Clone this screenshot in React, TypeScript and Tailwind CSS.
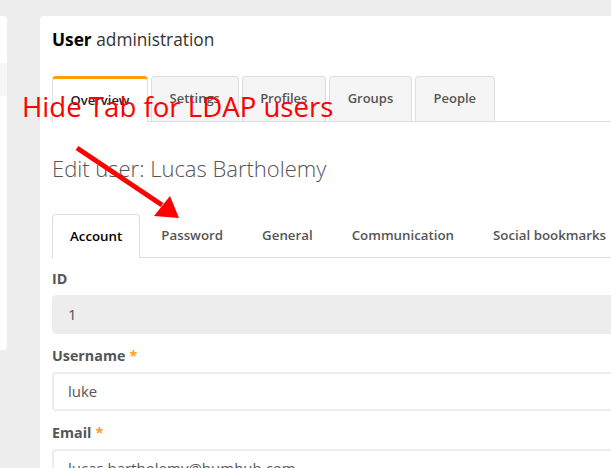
import React from 'react'

const topTabs = ['Overview', 'Settings', 'Profiles', 'Groups', 'People']
const userTabs = ['Account', 'Password', 'General', 'Communication', 'Social bookmarks']

const Field = ({ label, required, value, readOnly }: { label: string; required?: boolean; value: string; readOnly?: boolean }) => (
  <div className="flex flex-col">
    <label className="text-[14.3px] font-bold text-[#555] leading-[20px]">
      {label}
      {required && <span className="text-[#f8a212] ml-1">*</span>}
    </label>
    <div
      className={
        readOnly
          ? 'mt-[6px] h-[39px] rounded-[4px] bg-[#ededed] px-4 flex items-center text-[15px] text-[#555]'
          : 'mt-[6px] h-[39px] rounded-[4px] border-2 border-[#ededed] bg-white px-[14px] flex items-center text-[15px] text-[#555]'
      }
    >
      {value}
    </div>
  </div>
)

const App = () => {
  return (
    <div className="relative w-[611px] h-[468px] overflow-hidden bg-[#ededed] font-['Open_Sans',sans-serif]">
      <div className="flex pt-4 gap-[33px]">
        {/* left sidebar */}
        <div className="w-[7px] h-[334px] bg-white rounded-r-[4px] shrink-0 flex flex-col">
          <div className="mt-[47px] h-[33px] bg-[#f7f7f7]" />
        </div>

        {/* main panel */}
        <div className="w-[660px] shrink-0 bg-white rounded-[4px] px-3 pb-10">
          <h1 className="pt-[12px] text-[17.3px] leading-[24px] text-[#333]">
            <strong className="font-bold text-black">User</strong> administration
          </h1>

          <div className="mt-[24px] flex border-b border-[#ddd] -mr-3">
            {topTabs.map((t, i) => (
              <div
                key={t}
                className={
                  i === 0
                    ? 'mr-[3px] -mb-px h-[46px] px-[18px] flex items-center justify-center rounded-t-[4px] border border-b-0 border-[#ddd] border-t-[3px] border-t-[#fd9d00] bg-white text-[13px] font-semibold text-[#222] w-[96px]'
                    : 'mr-[3px] h-[45px] px-[17.6px] flex items-center justify-center rounded-t-[4px] border border-b-0 border-[#ddd] bg-[#f5f5f5] text-[13px] font-semibold text-[#555]'
                }
              >
                {t}
              </div>
            ))}
          </div>

          <h2 className="mt-[31px] text-[22px] font-light leading-[30px] text-[#555]">Edit user: Lucas Bartholemy</h2>

          <div className="mt-[31px] flex border-b border-[#ddd] -mr-3">
            {userTabs.map((t, i) => (
              <div
                key={t}
                className={
                  i === 0
                    ? 'mr-[3px] -mb-px h-[44px] px-[17px] flex items-center rounded-t-[4px] border border-b-0 border-[#ddd] bg-white text-[13.3px] font-semibold text-black whitespace-nowrap'
                    : 'mr-[3px] h-[43px] px-[18px] flex items-center text-[13.3px] font-semibold text-[#555] whitespace-nowrap'
                }
              >
                {t}
              </div>
            ))}
          </div>

          <div className="mt-[11px] flex flex-col gap-[12px]">
            <Field label="ID" value="1" readOnly />
            <Field label="Username" required value="luke" />
            <Field label="Email" required value="lucas.bartholemy@humhub.com" />
          </div>
        </div>
      </div>

      {/* annotation overlay */}
      <div className="absolute left-[22px] top-[88px] text-[27.6px] leading-[36px] text-[#ff0000] font-['Open_Sans',sans-serif] whitespace-nowrap">
        Hide Tab for LDAP users
      </div>
      <svg className="absolute left-0 top-0 pointer-events-none" width="611" height="468">
        <line x1="77" y1="148" x2="162" y2="205" stroke="#ff0000" strokeWidth="5" />
        <polygon points="179,218 154,216 170,196" fill="#ff0000" />
      </svg>
    </div>
  )
}

export default App
